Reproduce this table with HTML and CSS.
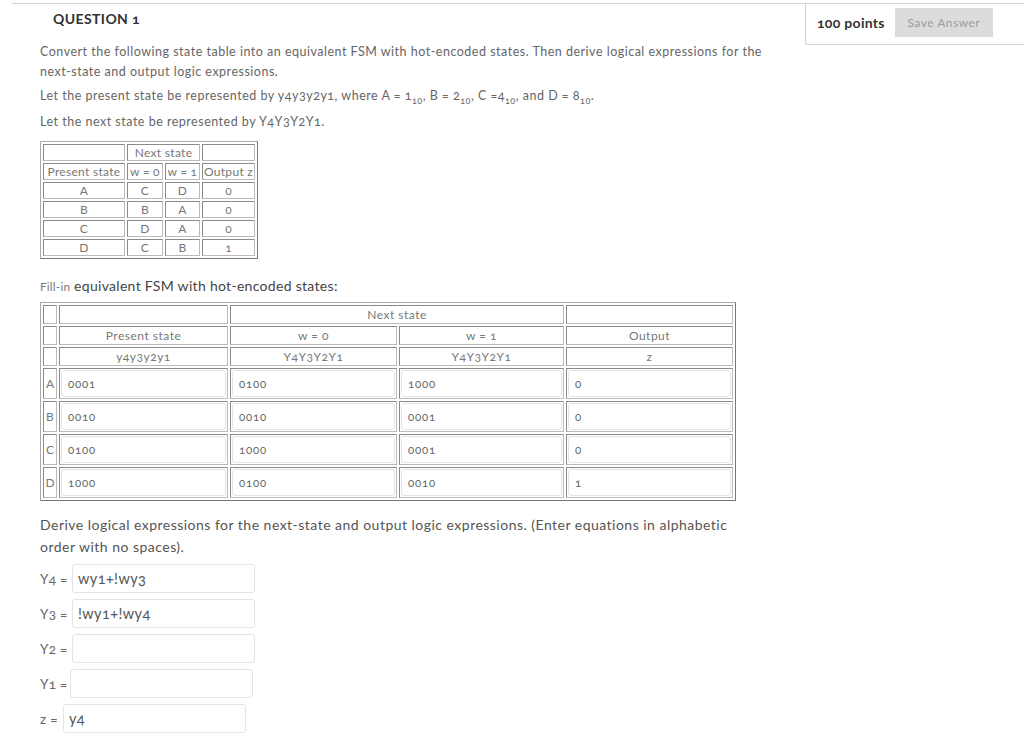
FILE: index.html
```html
<!DOCTYPE html>
<html>
<head>
<meta charset="utf-8">
<link rel="stylesheet" href="styles.css">
</head>
<body>
<div class="header">
  <div class="qtitle">QUESTION 1</div>
  <div class="points-box">
    <span class="points">100 points</span>
    <button class="save">Save Answer</button>
  </div>
</div>
<div class="content">
  <p class="p1">Convert the following state table into an equivalent FSM with hot-encoded states. Then derive logical expressions for the next-state and output logic expressions.</p>
  <p class="p2">Let the present state be represented by y4y3y2y1, where A = 1<sub>10</sub>, B = 2<sub>10</sub>, C =4<sub>10</sub>, and D = 8<sub>10</sub>.</p>
  <p class="p3">Let the next state be represented by Y4Y3Y2Y1.</p>

  <table class="small">
    <colgroup><col class="c1"><col class="c2"><col class="c3"><col class="c4"></colgroup>
    <tr><td></td><td colspan="2">Next state</td><td></td></tr>
    <tr><td>Present state</td><td>w = 0</td><td>w = 1</td><td>Output z</td></tr>
    <tr><td>A</td><td>C</td><td>D</td><td>0</td></tr>
    <tr><td>B</td><td>B</td><td>A</td><td>0</td></tr>
    <tr><td>C</td><td>D</td><td>A</td><td>0</td></tr>
    <tr><td>D</td><td>C</td><td>B</td><td>1</td></tr>
  </table>

  <p class="fill"><span class="fill-a">Fill-in</span> equivalent FSM with hot-encoded states:</p>

  <table class="big">
    <colgroup><col class="b0"><col class="b1"><col class="b2"><col class="b3"><col class="b4"></colgroup>
    <tr class="hrow"><td></td><td></td><td colspan="2">Next state</td><td></td></tr>
    <tr class="hrow"><td></td><td>Present state</td><td>w = 0</td><td>w = 1</td><td>Output</td></tr>
    <tr class="hrow"><td></td><td>y4y3y2y1</td><td>Y4Y3Y2Y1</td><td>Y4Y3Y2Y1</td><td>z</td></tr>
    <tr class="drow"><td class="lbl">A</td><td><div class="cell-in">0001</div></td><td><div class="cell-in">0100</div></td><td><div class="cell-in">1000</div></td><td><div class="cell-in">0</div></td></tr>
    <tr class="drow"><td class="lbl">B</td><td><div class="cell-in">0010</div></td><td><div class="cell-in">0010</div></td><td><div class="cell-in">0001</div></td><td><div class="cell-in">0</div></td></tr>
    <tr class="drow"><td class="lbl">C</td><td><div class="cell-in">0100</div></td><td><div class="cell-in">1000</div></td><td><div class="cell-in">0001</div></td><td><div class="cell-in">0</div></td></tr>
    <tr class="drow"><td class="lbl">D</td><td><div class="cell-in">1000</div></td><td><div class="cell-in">0100</div></td><td><div class="cell-in">0010</div></td><td><div class="cell-in">1</div></td></tr>
  </table>

  <p class="derive">Derive logical expressions for the next-state and output logic expressions. (Enter equations in alphabetic order with no spaces).</p>

  <div class="eqs">
    <div class="eq"><span class="eq-l">Y4 =</span><div class="eq-in">wy1+!wy3</div></div>
    <div class="eq"><span class="eq-l">Y3 =</span><div class="eq-in">!wy1+!wy4</div></div>
    <div class="eq"><span class="eq-l">Y2 =</span><div class="eq-in"></div></div>
    <div class="eq"><span class="eq-l eq-y1">Y1 =</span><div class="eq-in"></div></div>
    <div class="eq"><span class="eq-l eq-z">z =</span><div class="eq-in">y4</div></div>
  </div>
</div>
</body>
</html>
```
FILE: styles.css
```css
* { box-sizing: border-box; }
body {
  margin: 0;
  background: #fff;
  font-family: "Lato", "Open Sans", sans-serif;
  color: #555;
  font-variant-numeric: oldstyle-nums;
}
.header {
  display: flex;
  margin: 3px 0 0 12px;
  border-top: 1px solid #d0d0d0;
}
.qtitle {
  flex: 1;
  padding: 6px 0 0 41px;
  font-size: 14px;
  font-weight: bold;
  color: #333;
  letter-spacing: 0.4px;
}
.points-box {
  width: 219px;
  height: 41px;
  border-left: 1px solid #d0d0d0;
  border-bottom: 1px solid #d0d0d0;
  border-bottom-left-radius: 3px;
  display: flex;
  align-items: center;
  padding: 0 0 4px 11px;
  gap: 10px;
}
.points {
  font-size: 14px;
  font-weight: bold;
  color: #333;
  letter-spacing: 0.3px;
}
.save {
  width: 98px;
  height: 29px;
  border: none;
  background: #dcdcdc;
  color: #9a9a9a;
  font-family: inherit;
  font-size: 12px;
  letter-spacing: 0.5px;
  padding: 0;
}
.content {
  padding-left: 40px;
}
p { margin: 0; }
.p1, .p2, .p3 {
  font-size: 12.5px;
  letter-spacing: 0.5px;
  line-height: 20px;
  color: #666;
}
.p1 {
  margin-top: -3px;
  width: 730px;
}
.p2 { margin-top: 4px; }
.p2 sub {
  font-size: 9px;
  line-height: 0;
}
.p3 { margin-top: 6px; }
table {
  border-collapse: separate;
  border-spacing: 2px;
  table-layout: fixed;
}
td {
  border: 1px solid #8a8a8a;
  border-right-color: #bbb;
  border-bottom-color: #bbb;
  padding: 0;
  text-align: center;
  white-space: nowrap;
  overflow: hidden;
}
.small {
  margin-top: 9px;
  width: 214px;
  border: 1px solid #aaa;
  border-right-color: #777;
  border-bottom-color: #777;
  font-size: 12px;
  letter-spacing: 0.3px;
  color: #777;
}
.small td { height: 17px; line-height: 15px; }
.small .c1 { width: 82px; }
.small .c2 { width: 36px; }
.small .c3 { width: 35px; }
.small .c4 { width: 53px; }
.fill {
  margin-top: 17px;
  font-size: 14px;
  letter-spacing: 0.3px;
  line-height: 20px;
  color: #444;
}
.fill-a { font-size: 11.5px; color: #777; letter-spacing: 0.3px; }
.big {
  margin-top: 5px;
  width: 695px;
  border: 1px solid #aaa;
  border-right-color: #777;
  border-bottom-color: #777;
  font-size: 12px;
  letter-spacing: 0.5px;
  color: #777;
}
.big .b0 { width: 14px; }
.big .b1 { width: 169px; }
.big .b2 { width: 167px; }
.big .b3 { width: 165px; }
.big .b4 { width: 167px; }
.big .hrow td { height: 19px; line-height: 17px; }
.big .drow td { height: 31px; padding: 1px; }
.big .lbl { padding: 0; font-size: 12px; letter-spacing: 0; color: #777; }
.cell-in {
  height: 27px;
  border: 1px solid #e4e4e4;
  border-radius: 3px;
  text-align: left;
  padding-left: 6px;
  line-height: 25px;
  font-size: 11.5px;
  letter-spacing: 0.8px;
  color: #666;
}
.derive {
  margin-top: 13px;
  font-size: 14px;
  letter-spacing: 0.48px;
  line-height: 22px;
  color: #555;
  width: 720px;
}
.eqs {
  margin-top: 6px;
  display: flex;
  flex-direction: column;
  gap: 6px;
}
.eq {
  display: flex;
  align-items: center;
  gap: 4px;
}
.eq-l {
  font-size: 13.5px;
  letter-spacing: 0.3px;
  color: #666;
  width: 28px;
  white-space: nowrap;
}
.eq-y1 { width: 26px; }
.eq-z { width: 19px; }
.eq-in {
  width: 183px;
  height: 29px;
  border: 1px solid #e4e4e4;
  border-radius: 3px;
  padding-left: 5px;
  line-height: 27px;
  font-size: 14.5px;
  letter-spacing: 0.4px;
  color: #555;
}
```
